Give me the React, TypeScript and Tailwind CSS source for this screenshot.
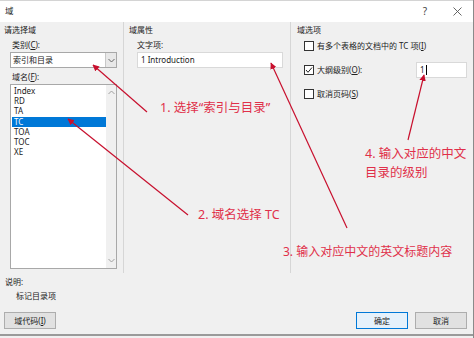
import React from "react";

function ChevronUp() {
  return (
    <svg width="7" height="5" viewBox="0 0 7 5">
      <polyline points="0.5,4 3.5,1 6.5,4" fill="none" stroke="#a0a0a0" strokeWidth="1" />
    </svg>
  );
}
function ChevronDown({ color = "#a0a0a0" }: { color?: string }) {
  return (
    <svg width="7" height="5" viewBox="0 0 7 5">
      <polyline points="0.5,1 3.5,4 6.5,1" fill="none" stroke={color} strokeWidth="1" />
    </svg>
  );
}

function Check({ checked = false }: { checked?: boolean }) {
  return (
    <div className="w-[10px] h-[10px] border border-[#333] bg-white flex items-center justify-center shrink-0">
      {checked && (
        <svg width="8" height="8" viewBox="0 0 8 8">
          <polyline points="1,4 3,6.3 7,1.5" fill="none" stroke="#222" strokeWidth="1" />
        </svg>
      )}
    </div>
  );
}

export default function App() {
  const items = ["Index", "RD", "TA", "TC", "TOA", "TOC", "XE"];
  return (
    <div className="relative w-[474px] h-[338px] overflow-hidden bg-[#f0f0f0] text-[8px] text-[#222] font-['Noto_Sans','Noto_Sans_CJK_SC',sans-serif] border-r border-[#8a8a8a] flex flex-col">
      {/* title bar */}
      <div className="h-[22px] shrink-0 bg-white border-t border-[#d4d4d4] flex items-center pl-[5px]">
        <span className="text-[8.5px]">域</span>
        <div className="flex-1" />
        <span className="text-[10px] text-[#444] mr-[26px]">?</span>
        <svg width="9" height="9" viewBox="0 0 9 9" className="mr-[11px]">
          <line x1="0.5" y1="0.5" x2="8.5" y2="8.5" stroke="#555" strokeWidth="0.9" />
          <line x1="8.5" y1="0.5" x2="0.5" y2="8.5" stroke="#555" strokeWidth="0.9" />
        </svg>
      </div>

      {/* columns */}
      <div className="flex h-[251px] shrink-0">
        {/* left */}
        <div className="w-[123px] flex flex-col">
          <div className="h-[16px] flex items-center pl-[4px]">请选择域</div>
          <div className="h-[14px] flex items-center pl-[12px]">
            类别(<span className="underline">C</span>):
          </div>
          <div className="ml-[10px] w-[107px] h-[16px] bg-white border border-[#a8a8a8] flex items-center">
            <span className="flex-1 pl-[2px]">索引和目录</span>
            <div className="w-[11px] h-full bg-[#e8e8e8] border-l border-[#c8c8c8] flex items-center justify-center">
              <ChevronDown color="#666" />
            </div>
          </div>
          <div className="h-[14px] mt-[2px] flex items-center pl-[12px]">
            域名(<span className="underline">F</span>):
          </div>
          <div className="ml-[10px] w-[107px] h-[185px] bg-white border border-[#a8a8a8] flex">
            <div className="flex-1 pt-[1px] pl-[1px]">
              {items.map((it) => (
                <div
                  key={it}
                  className={
                    "h-[10.2px] leading-[10.2px] pl-[2px] " +
                    (it === "TC" ? "bg-[#0078d7] text-white" : "")
                  }
                >
                  {it}
                </div>
              ))}
            </div>
            <div className="w-[10px] bg-[#f0f0f0] flex flex-col items-center justify-between py-[5px]">
              <ChevronUp />
              <ChevronDown />
            </div>
          </div>
        </div>

        {/* middle */}
        <div className="w-[167px] border-l border-[#d6d6d6] flex flex-col">
          <div className="h-[16px] flex items-center pl-[5px]">域属性</div>
          <div className="h-[14px] flex items-center pl-[13px]">文字项:</div>
          <div className="ml-[13px] w-[146px] h-[16px] bg-white border border-[#d9d9d9] flex items-center pl-[3px]">
            1 Introduction
          </div>
        </div>

        {/* right */}
        <div className="flex-1 border-l border-[#d6d6d6] flex flex-col">
          <div className="h-[16px] flex items-center pl-[6px]">域选项</div>
          <div className="h-[14px] mt-[1px] flex items-center pl-[13px] gap-[3px]">
            <Check />
            <span>
              有多个表格的文档中的 TC 项(<span className="underline">I</span>)
            </span>
          </div>
          <div className="h-[16px] mt-[9px] flex items-center pl-[13px] gap-[3px]">
            <Check checked />
            <span>
              大纲级别(<span className="underline">O</span>):
            </span>
            <div className="ml-auto mr-[6px] w-[51px] h-[16px] bg-white border border-[#d9d9d9] flex items-center pl-[3px]">
              1<span className="w-[1px] h-[10px] bg-black ml-[1px]" />
            </div>
          </div>
          <div className="h-[14px] mt-[9px] flex items-center pl-[13px] gap-[3px]">
            <Check />
            <span>
              取消页码(<span className="underline">S</span>)
            </span>
          </div>
        </div>
      </div>

      {/* bottom */}
      <div className="flex flex-col flex-1">
        <div className="h-[14px] mt-[2px] flex items-center pl-[5px]">说明:</div>
        <div className="h-[13px] flex items-center pl-[16px]">标记目录项</div>
        <div className="mt-[10px] h-[17px] flex items-stretch">
          <div className="ml-[4px] w-[52px] bg-[#e1e1e1] border border-[#adadad] flex items-center justify-center">
            域代码(<span className="underline">I</span>)
          </div>
          <div className="flex-1" />
          <div className="w-[52px] bg-[#e5f1fb] border border-[#0078d7] flex items-center justify-center">确定</div>
          <div className="ml-[7px] mr-[6px] w-[52px] bg-[#e1e1e1] border border-[#adadad] flex items-center justify-center">
            取消
          </div>
        </div>
        <div className="flex-1" />
        <div className="h-[2px] bg-[#9a9a9a] mb-[2px]" />
      </div>

      {/* annotations overlay */}
      <svg className="absolute left-0 top-0 pointer-events-none" width="474" height="338" viewBox="0 0 474 338">
        <defs>
          <marker id="ah" viewBox="0 0 10 10" refX="9" refY="5" markerWidth="5.5" markerHeight="5.5" orient="auto">
            <path d="M0,0 L10,5 L0,10 z" fill="#c8102e" />
          </marker>
        </defs>
        <line x1="147" y1="112" x2="93" y2="65" stroke="#c8102e" strokeWidth="1.2" markerEnd="url(#ah)" />
        <line x1="188" y1="215" x2="68" y2="119" stroke="#c8102e" strokeWidth="1.2" markerEnd="url(#ah)" />
        <line x1="347" y1="228" x2="271" y2="63" stroke="#c8102e" strokeWidth="1.2" markerEnd="url(#ah)" />
        <line x1="408" y1="140" x2="424" y2="75" stroke="#c8102e" strokeWidth="1.2" markerEnd="url(#ah)" />
      </svg>
      <div className="absolute left-[160px] top-[99px] text-[12.5px] leading-[18px] text-[#e0304a] whitespace-nowrap">
        1. 选择“索引与目录”
      </div>
      <div className="absolute left-[198px] top-[206px] text-[12.5px] leading-[18px] text-[#e0304a] whitespace-nowrap">
        2. 域名选择 TC
      </div>
      <div className="absolute left-[283px] top-[243px] text-[12px] leading-[18px] text-[#e0304a] whitespace-nowrap">
        3. 输入对应中文的英文标题内容
      </div>
      <div className="absolute left-[365px] top-[144px] text-[12.5px] leading-[19px] text-[#e0304a] whitespace-nowrap">
        4. 输入对应的中文
        <br />
        目录的级别
      </div>
    </div>
  );
}
